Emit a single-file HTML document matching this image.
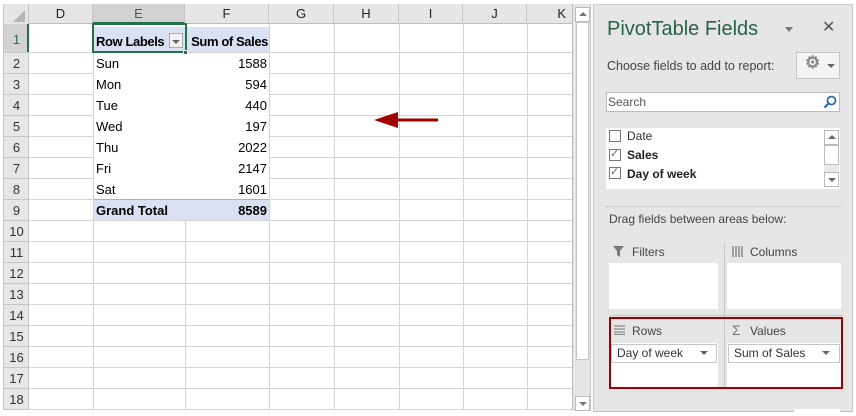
<!DOCTYPE html>
<html><head><meta charset="utf-8"><style>
*{box-sizing:border-box;margin:0;padding:0}
body{width:856px;height:416px;background:#fff;position:relative;overflow:hidden;font-family:"Liberation Sans",sans-serif;color:#000}
.a{position:absolute}
.hdr{background:#e6e6e6;color:#333;font-size:13px;text-align:center}
.vl{position:absolute;width:1px;background:#d4d4d4}
.rn{position:absolute;left:4px;width:25px;text-align:center;font-size:13px;color:#333}
.c{position:absolute;font-size:13px;height:21px;line-height:21px}
.ch{position:absolute;top:4px;height:20px;line-height:20px;font-size:13px;text-align:center;color:#222;border-right:1px solid #c6c6c6}
.pn{font-size:12px;color:#444}
.box{position:absolute;background:#fff}
.dd{position:absolute;background:#fff;border:1px solid #c6c6c6;height:19px;font-size:12px;line-height:17px;padding-left:5px;color:#333}
.tri{position:absolute;width:0;height:0;border-left:4px solid transparent;border-right:4px solid transparent;border-top:4px solid #666}
</style></head><body>
<div class="a" style="left:3px;top:4px;width:570px;height:406px;border:1px solid #c6c6c6;border-right:none"></div>
<div class="a hdr" style="left:4px;top:4px;width:568px;height:20px;border-bottom:1px solid #bdbdbd"></div>
<div class="a" style="left:4px;top:4px;width:25px;height:20px;background:#e6e6e6;border-right:1px solid #c6c6c6"></div>
<div class="a" style="left:13px;top:10px;width:0;height:0;border-left:12px solid transparent;border-bottom:12px solid #b8b8b8"></div>
<div class="ch" style="left:29px;width:64px">D</div>
<div class="ch" style="left:93px;width:92px;background:#d2d2d2;border-bottom:2px solid #217346;color:#217346">E</div>
<div class="ch" style="left:185px;width:84px">F</div>
<div class="ch" style="left:269px;width:65px">G</div>
<div class="ch" style="left:334px;width:65px">H</div>
<div class="ch" style="left:399px;width:64px">I</div>
<div class="ch" style="left:463px;width:64px">J</div>
<div class="ch" style="left:527px;width:45px;text-align:right;padding-right:6px;border-right:none">K</div>
<div class="a" style="left:4px;top:24px;width:25px;height:386px;background:#e6e6e6;border-right:1px solid #c6c6c6"></div>
<div class="a" style="left:4px;top:24px;width:25px;height:28px;background:#d2d2d2;border-right:2px solid #217346"></div>
<div class="a" style="left:4px;top:52px;width:568px;height:358px;background:repeating-linear-gradient(to bottom,#d4d4d4 0,#d4d4d4 1px,transparent 1px,transparent 21px)"></div>
<div class="a" style="left:4px;top:52px;width:25px;height:358px;background:repeating-linear-gradient(to bottom,#c6c6c6 0,#c6c6c6 1px,transparent 1px,transparent 21px)"></div>
<div class="vl" style="left:93px;top:24px;height:386px"></div>
<div class="vl" style="left:185px;top:220px;height:190px"></div>
<div class="vl" style="left:269px;top:24px;height:386px"></div>
<div class="vl" style="left:334px;top:24px;height:386px"></div>
<div class="vl" style="left:399px;top:24px;height:386px"></div>
<div class="vl" style="left:463px;top:24px;height:386px"></div>
<div class="vl" style="left:527px;top:24px;height:386px"></div>
<div class="vl" style="left:572px;top:4px;height:406px;background:#bdbdbd"></div>
<div class="a" style="left:94px;top:53px;width:175px;height:146px;background:#fff"></div>
<div class="a" style="left:94px;top:27px;width:175px;height:25px;background:#dae1f3"></div>
<div class="a" style="left:94px;top:199px;width:175px;height:21px;background:#dae1f3;border-top:1px solid #9fb1d9"></div>
<div class="a" style="left:92px;top:23px;width:95px;height:30px;border:2px solid #217346"></div>
<div class="a" style="left:183px;top:50px;width:5px;height:5px;background:#217346;border:1px solid #fff"></div>
<div class="a" style="left:169px;top:33px;width:14px;height:15px;border:1px solid #aaa;background:#f4f4f4"></div>
<div class="tri" style="left:172px;top:40px"></div>
<div class="rn" style="top:24px;height:28px;line-height:32px;color:#217346">1</div>
<div class="rn" style="top:52px;line-height:23px">2</div>
<div class="rn" style="top:73px;line-height:23px">3</div>
<div class="rn" style="top:94px;line-height:23px">4</div>
<div class="rn" style="top:115px;line-height:23px">5</div>
<div class="rn" style="top:136px;line-height:23px">6</div>
<div class="rn" style="top:157px;line-height:23px">7</div>
<div class="rn" style="top:178px;line-height:23px">8</div>
<div class="rn" style="top:199px;line-height:23px">9</div>
<div class="rn" style="top:220px;line-height:23px">10</div>
<div class="rn" style="top:241px;line-height:23px">11</div>
<div class="rn" style="top:262px;line-height:23px">12</div>
<div class="rn" style="top:283px;line-height:23px">13</div>
<div class="rn" style="top:304px;line-height:23px">14</div>
<div class="rn" style="top:325px;line-height:23px">15</div>
<div class="rn" style="top:346px;line-height:23px">16</div>
<div class="rn" style="top:367px;line-height:23px">17</div>
<div class="rn" style="top:388px;line-height:23px">18</div>
<div class="c" style="left:96px;top:31px;font-weight:bold;letter-spacing:-0.4px">Row Labels</div>
<div class="c" style="left:186px;top:31px;width:82px;text-align:right;font-weight:bold;letter-spacing:-0.4px">Sum of Sales</div>
<div class="c" style="left:96px;top:53px">Sun</div><div class="c" style="left:186px;top:53px;width:81px;text-align:right">1588</div>
<div class="c" style="left:96px;top:74px">Mon</div><div class="c" style="left:186px;top:74px;width:81px;text-align:right">594</div>
<div class="c" style="left:96px;top:95px">Tue</div><div class="c" style="left:186px;top:95px;width:81px;text-align:right">440</div>
<div class="c" style="left:96px;top:116px">Wed</div><div class="c" style="left:186px;top:116px;width:81px;text-align:right">197</div>
<div class="c" style="left:96px;top:137px">Thu</div><div class="c" style="left:186px;top:137px;width:81px;text-align:right">2022</div>
<div class="c" style="left:96px;top:158px">Fri</div><div class="c" style="left:186px;top:158px;width:81px;text-align:right">2147</div>
<div class="c" style="left:96px;top:179px">Sat</div><div class="c" style="left:186px;top:179px;width:81px;text-align:right">1601</div>
<div class="c" style="left:96px;top:200px;font-weight:bold">Grand Total</div><div class="c" style="left:186px;top:200px;width:81px;text-align:right;font-weight:bold">8589</div>
<svg class="a" style="left:370px;top:108px" width="72" height="24"><path d="M68 12 L28 12" stroke="#a00000" stroke-width="3"/><path d="M4 12 L28 4 L28 20 Z" fill="#a00000"/></svg>
<div class="a" style="left:573px;top:4px;width:18px;height:407px;background:#e6e6e6;border-right:1px solid #c6c6c6"></div>
<div class="a" style="left:575px;top:7px;width:15px;height:15px;background:#fff;border:1px solid #bbb"></div>
<div class="a" style="left:579px;top:12px;border-left:4px solid transparent;border-right:4px solid transparent;border-bottom:4px solid #777"></div>
<div class="a" style="left:576px;top:22px;width:13px;height:338px;background:#fff;border:1px solid #c6c6c6"></div>
<div class="a" style="left:575px;top:396px;width:15px;height:15px;background:#fff;border:1px solid #bbb"></div>
<div class="tri" style="left:579px;top:402px;border-top-color:#777"></div>
<div class="a" style="left:593px;top:4px;width:260px;height:408px;background:#e6e6e6;border-left:1px solid #c6c6c6;border-right:1px solid #c6c6c6;border-top:1px solid #d0d0d0;border-bottom:1px solid #bdbdbd"></div>
<div class="a" style="left:607px;top:18px;font-size:20px;color:#2a6148">PivotTable Fields</div>
<div class="tri" style="left:785px;top:27px;border-top-color:#777;border-top-width:5px"></div>
<div class="a" style="left:822px;top:17px;font-size:16px;color:#555">✕</div>
<div class="a pn" style="left:607px;top:59px;font-size:12.5px">Choose fields to add to report:</div>
<div class="a" style="left:796px;top:52px;width:44px;height:27px;background:#f4f4f4;border:1px solid #c6c6c6"></div>
<div class="a" style="left:805px;top:53px;font-size:17px;color:#888;font-weight:bold">⚙</div>
<div class="tri" style="left:827px;top:64px;border-top-color:#666"></div>
<div class="a" style="left:606px;top:92px;width:234px;height:20px;background:#fff;border:1px solid #bbb"></div>
<div class="a pn" style="left:608px;top:95px;color:#555">Search</div>
<svg class="a" style="left:822px;top:94px" width="16" height="16"><circle cx="9.5" cy="6.5" r="4" fill="none" stroke="#2b6cb0" stroke-width="1.8"/><path d="M6.5 9.5 L2.5 13.5" stroke="#2b6cb0" stroke-width="2.2"/></svg>
<div class="box" style="left:606px;top:128px;width:234px;height:61px"></div>
<div class="a" style="left:609px;top:130px;width:12px;height:12px;border:1px solid #777;background:#fff"></div>
<div class="a pn" style="left:627px;top:129px;color:#333">Date</div>
<div class="a" style="left:609px;top:149px;width:12px;height:12px;border:1px solid #777;background:#fff"></div>
<div class="a" style="left:610px;top:147px;font-size:11px;color:#666">✓</div>
<div class="a pn" style="left:627px;top:148px;color:#222;font-weight:bold">Sales</div>
<div class="a" style="left:609px;top:167px;width:12px;height:12px;border:1px solid #777;background:#fff"></div>
<div class="a" style="left:610px;top:165px;font-size:11px;color:#666">✓</div>
<div class="a pn" style="left:627px;top:167px;color:#222;font-weight:bold">Day of week</div>
<div class="a" style="left:824px;top:130px;width:15px;height:57px;background:#e9e9e9"></div>
<div class="a" style="left:824px;top:130px;width:15px;height:15px;background:#fff;border:1px solid #bbb"></div>
<div class="a" style="left:828px;top:135px;border-left:4px solid transparent;border-right:4px solid transparent;border-bottom:4px solid #666"></div>
<div class="a" style="left:824px;top:145px;width:15px;height:20px;background:#fff;border:1px solid #bbb"></div>
<div class="a" style="left:824px;top:172px;width:15px;height:15px;background:#fff;border:1px solid #bbb"></div>
<div class="tri" style="left:828px;top:178px"></div>
<div class="a" style="left:606px;top:206px;width:236px;border-top:1px dotted #bbb"></div>
<div class="a pn" style="left:609px;top:212px">Drag fields between areas below:</div>
<div class="a" style="left:724px;top:243px;width:1px;height:145px;background:#c6c6c6"></div>
<div class="a" style="left:609px;top:315px;width:233px;height:1px;background:#c6c6c6"></div>
<svg class="a" style="left:613px;top:246px" width="12" height="12"><path d="M0 0 H11 L7 5 V11 L4 9 V5 Z" fill="#777"/></svg>
<div class="a pn" style="left:632px;top:245px">Filters</div>
<svg class="a" style="left:732px;top:246px" width="12" height="11"><path d="M1 0v11M4 0v11M7 0v11M10 0v11" stroke="#888" stroke-width="1.5"/></svg>
<div class="a pn" style="left:750px;top:245px">Columns</div>
<div class="box" style="left:609px;top:263px;width:109px;height:46px"></div>
<div class="box" style="left:727px;top:263px;width:114px;height:46px"></div>
<div class="box" style="left:610px;top:343px;width:108px;height:45px"></div>
<div class="box" style="left:727px;top:343px;width:114px;height:45px"></div>
<svg class="a" style="left:614px;top:325px" width="12" height="10"><path d="M0 1H11M0 4H11M0 7H11M0 9.5H11" stroke="#888" stroke-width="1.2"/></svg>
<div class="a pn" style="left:632px;top:324px">Rows</div>
<div class="a pn" style="left:732px;top:322px;font-size:14px;color:#777">Σ</div>
<div class="a pn" style="left:750px;top:324px">Values</div>
<div class="dd" style="left:611px;top:344px;width:106px">Day of week</div>
<div class="tri" style="left:700px;top:351px"></div>
<div class="dd" style="left:728px;top:344px;width:112px">Sum of Sales</div>
<div class="tri" style="left:822px;top:351px"></div>
<div class="a" style="left:609px;top:317px;width:234px;height:72px;border:2px solid #a00000"></div>
<div class="a" style="left:794px;top:409px;width:46px;height:3px;background:#fff"></div>
</body></html>
